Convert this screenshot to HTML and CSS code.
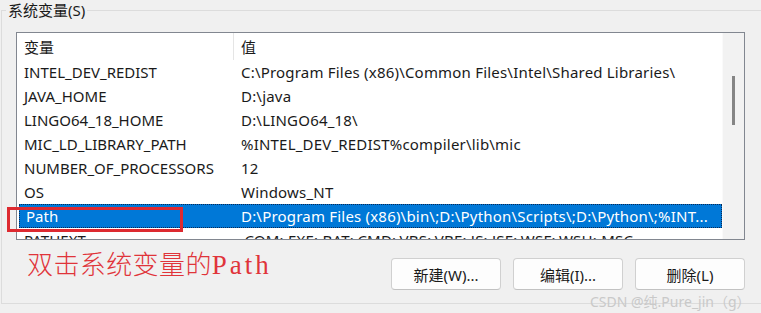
FILE: index.html
```html
<!DOCTYPE html>
<html lang="zh-CN">
<head>
    <meta charset="UTF-8">
    <title>系统变量</title>
    <link rel="stylesheet" href="styles.css">
</head>
<body>
    <fieldset class="group">
        <legend>系统变量(S)</legend>

        <div class="list">
            <div class="rows">
                <div class="row head">
                    <span class="col-name">变量</span>
                    <span class="col-value">值</span>
                </div>
                <div class="row">
                    <span class="col-name">INTEL_DEV_REDIST</span>
                    <span class="col-value">C:\Program Files (x86)\Common Files\Intel\Shared Libraries\</span>
                </div>
                <div class="row">
                    <span class="col-name">JAVA_HOME</span>
                    <span class="col-value">D:\java</span>
                </div>
                <div class="row">
                    <span class="col-name">LINGO64_18_HOME</span>
                    <span class="col-value">D:\LINGO64_18\</span>
                </div>
                <div class="row">
                    <span class="col-name">MIC_LD_LIBRARY_PATH</span>
                    <span class="col-value">%INTEL_DEV_REDIST%compiler\lib\mic</span>
                </div>
                <div class="row">
                    <span class="col-name">NUMBER_OF_PROCESSORS</span>
                    <span class="col-value">12</span>
                </div>
                <div class="row">
                    <span class="col-name">OS</span>
                    <span class="col-value">Windows_NT</span>
                </div>
                <div class="row selected">
                    <span class="col-name">Path</span>
                    <span class="col-value">D:\Program Files (x86)\bin\;D:\Python\Scripts\;D:\Python\;%INT...</span>
                </div>
                <div class="row last">
                    <span class="col-name">PATHEXT</span>
                    <span class="col-value">.COM;.EXE;.BAT;.CMD;.VBS;.VBE;.JS;.JSE;.WSF;.WSH;.MSC</span>
                </div>
            </div>
            <div class="scrollbar"><div class="thumb"></div></div>
            <div class="mark"></div>
        </div>

        <div class="footer">
            <div class="note">双击系统变量的<span class="latin">Path</span></div>
            <div class="buttons">
                <button>新建(W)...</button>
                <button>编辑(I)...</button>
                <button>删除(L)</button>
            </div>
        </div>
    </fieldset>

    <div class="watermark">CSDN @纯.Pure_jin（g）</div>
</body>
</html>
```

FILE: styles.css
```css
body {
    margin: 0;
    background: #f0f0f0;
    font-family: "Noto Sans", "Noto Sans CJK SC", sans-serif;
    font-size: 15px;
    color: #1a1a1a;
    overflow: hidden;
    height: 313px;
    position: relative;
}

.group {
    margin: 0 -30px 0 1px;
    padding: 0;
    height: 302px;
    border: 1px solid #dcdcdc;
}

.group legend {
    margin-left: 4px;
    padding: 0 2px;
    line-height: 20px;
    font-size: 15px;
}

.list {
    position: relative;
    margin: 12px 0 0 14px;
    width: 729px;
    height: 208px;
    box-sizing: border-box;
    border: 1px solid #828790;
    background: white;
    display: flex;
}

.rows {
    flex: 1;
    overflow: hidden;
}

.row {
    display: flex;
    height: 24px;
    line-height: 24px;
    white-space: nowrap;
}

.row.head {
    height: 27px;
    line-height: 28px;
}

.row.last {
    height: 10px;
}

.col-name {
    width: 217px;
    flex: none;
    box-sizing: border-box;
    padding-left: 7px;
}

.head .col-name {
    border-right: 1px solid #e5e5e5;
}

.col-value {
    padding-left: 7px;
    letter-spacing: 0.2px;
}

.row.selected {
    margin-left: 2px;
    background: #0078d7;
    color: white;
    outline: 1px dotted #0a2a55;
    outline-offset: -1px;
}

.row.selected .col-name {
    width: 215px;
}

.scrollbar {
    width: 21px;
    flex: none;
    background: #f2f2f2;
    border-left: 1px solid #fafafa;
    position: relative;
}

.thumb {
    position: absolute;
    left: 9px;
    top: 43px;
    width: 3px;
    height: 49px;
    background: #858585;
}

.mark {
    position: absolute;
    left: -10px;
    top: 174px;
    width: 176px;
    height: 25px;
    border: 3px solid #dd2a30;
    box-sizing: border-box;
}

.footer {
    display: flex;
    justify-content: space-between;
    width: 743px;
}

.note {
    margin: 11px 0 0 25px;
    font-size: 26px;
    line-height: 26px;
    color: #e0343a;
    font-weight: 300;
    letter-spacing: 0.4px;
}

.note .latin {
    font-family: "Liberation Serif", serif;
    font-size: 27px;
    letter-spacing: 3px;
}

.buttons {
    display: flex;
    gap: 12px;
    margin-top: 18px;
}

.buttons button {
    width: 110px;
    height: 32px;
    font-family: inherit;
    font-size: 15px;
    color: #1a1a1a;
    background: #fdfdfd;
    border: 1px solid #d0d0d0;
    border-bottom-color: #c2c2c2;
    border-radius: 4px;
}

.watermark {
    position: absolute;
    left: 590px;
    top: 291px;
    font-size: 14px;
    color: #c9c9c9;
    white-space: nowrap;
}
```
